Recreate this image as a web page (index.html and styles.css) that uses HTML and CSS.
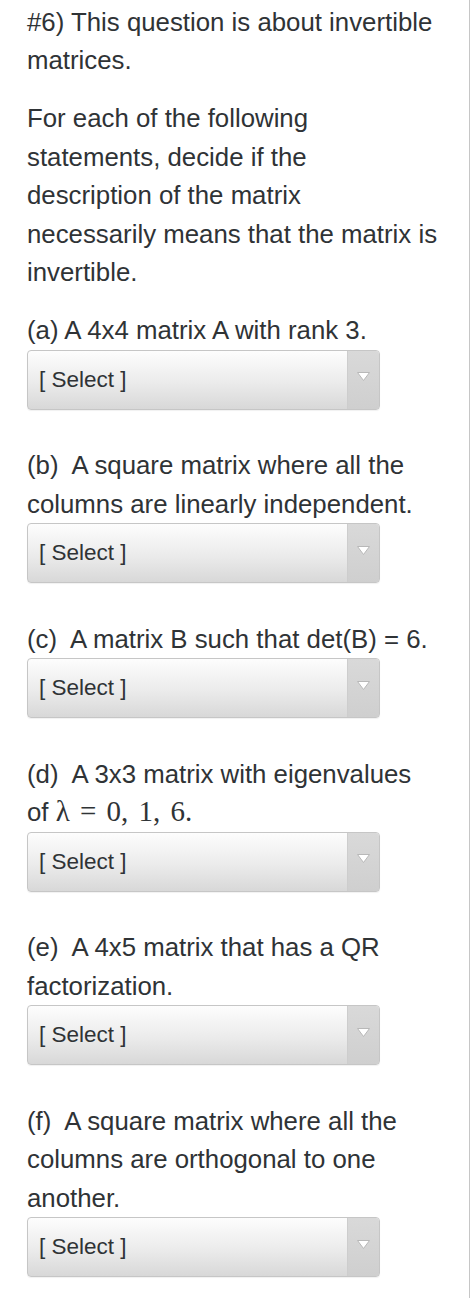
FILE: index.html
```html
<!DOCTYPE html>
<html lang="en">
<head>
<meta charset="utf-8">
<title>Question 6</title>
<link rel="stylesheet" href="styles.css">
</head>
<body>
<div class="page">
  <p class="para">#6) This question is about invertible matrices.</p>
  <p class="para">For each of the following<br>statements, decide if the<br>description of the matrix<br>necessarily means that the matrix is<br>invertible.</p>

  <div class="question">
    <p class="q-text">(a) A 4x4 matrix A with rank 3.</p>
    <div class="select"><span class="select-label">[ Select ]</span><span class="select-arrow"><svg width="13" height="9" viewBox="0 0 13 9"><polygon points="0.5,0.5 12.5,0.5 6.5,8.5" fill="#fff" stroke="#b8b8b8" stroke-width="1"/></svg></span></div>
  </div>

  <div class="question">
    <p class="q-text">(b)&nbsp; A square matrix where all the columns are linearly independent.</p>
    <div class="select"><span class="select-label">[ Select ]</span><span class="select-arrow"><svg width="13" height="9" viewBox="0 0 13 9"><polygon points="0.5,0.5 12.5,0.5 6.5,8.5" fill="#fff" stroke="#b8b8b8" stroke-width="1"/></svg></span></div>
  </div>

  <div class="question">
    <p class="q-text">(c)&nbsp; A matrix B such that det(B) = 6.</p>
    <div class="select"><span class="select-label">[ Select ]</span><span class="select-arrow"><svg width="13" height="9" viewBox="0 0 13 9"><polygon points="0.5,0.5 12.5,0.5 6.5,8.5" fill="#fff" stroke="#b8b8b8" stroke-width="1"/></svg></span></div>
  </div>

  <div class="question">
    <p class="q-text">(d)&nbsp; A 3x3 matrix with eigenvalues<br>of <span class="math">λ = 0, 1, 6.</span></p>
    <div class="select"><span class="select-label">[ Select ]</span><span class="select-arrow"><svg width="13" height="9" viewBox="0 0 13 9"><polygon points="0.5,0.5 12.5,0.5 6.5,8.5" fill="#fff" stroke="#b8b8b8" stroke-width="1"/></svg></span></div>
  </div>

  <div class="question">
    <p class="q-text">(e)&nbsp; A 4x5 matrix that has a QR factorization.</p>
    <div class="select"><span class="select-label">[ Select ]</span><span class="select-arrow"><svg width="13" height="9" viewBox="0 0 13 9"><polygon points="0.5,0.5 12.5,0.5 6.5,8.5" fill="#fff" stroke="#b8b8b8" stroke-width="1"/></svg></span></div>
  </div>

  <div class="question">
    <p class="q-text">(f)&nbsp; A square matrix where all the columns are orthogonal to one another.</p>
    <div class="select"><span class="select-label">[ Select ]</span><span class="select-arrow"><svg width="13" height="9" viewBox="0 0 13 9"><polygon points="0.5,0.5 12.5,0.5 6.5,8.5" fill="#fff" stroke="#b8b8b8" stroke-width="1"/></svg></span></div>
  </div>
</div>
</body>
</html>
```

FILE: styles.css
```css
html, body {
  margin: 0;
  padding: 0;
  background: #ffffff;
}

body {
  font-family: "Liberation Sans", Arial, sans-serif;
  color: #2f3336;
}

.page {
  box-sizing: border-box;
  width: 470px;
  min-height: 1298px;
  border-right: 1px solid #c6c6c6;
  padding: 2.5px 29px 0 27px;
  display: flex;
  flex-direction: column;
}

.para {
  margin: 0 0 19.5px 0;
  font-size: 25.8px;
  line-height: 38.5px;
}

.question {
  display: flex;
  flex-direction: column;
  margin-bottom: 36.5px;
}

.q-text {
  margin: 0;
  font-size: 25.8px;
  line-height: 38.5px;
}

.math {
  font-family: "Liberation Serif", "Times New Roman", serif;
  font-size: 29px;
  line-height: 1;
  word-spacing: 3px;
}

.select {
  box-sizing: border-box;
  width: 353px;
  height: 60px;
  border: 1px solid #c6c6c6;
  border-radius: 4px;
  background: linear-gradient(to bottom, #fdfdfd 0%, #ebebeb 55%, #d8d8d8 100%);
  box-shadow: 0 1px 1px rgba(0, 0, 0, 0.06);
  display: flex;
  align-items: stretch;
  overflow: hidden;
}

.select-label {
  flex: 1;
  display: flex;
  align-items: center;
  padding-left: 11px;
  font-size: 22.5px;
  color: #2f3336;
}

.select-arrow {
  width: 32px;
  border-left: 1px solid #cdcdcd;
  background: linear-gradient(to bottom, #d9d9d9 0%, #cfcfcf 100%);
  display: flex;
  align-items: center;
  justify-content: center;
  padding-bottom: 6px;
  box-sizing: border-box;
}

.select-arrow svg {
  display: block;
}
```
